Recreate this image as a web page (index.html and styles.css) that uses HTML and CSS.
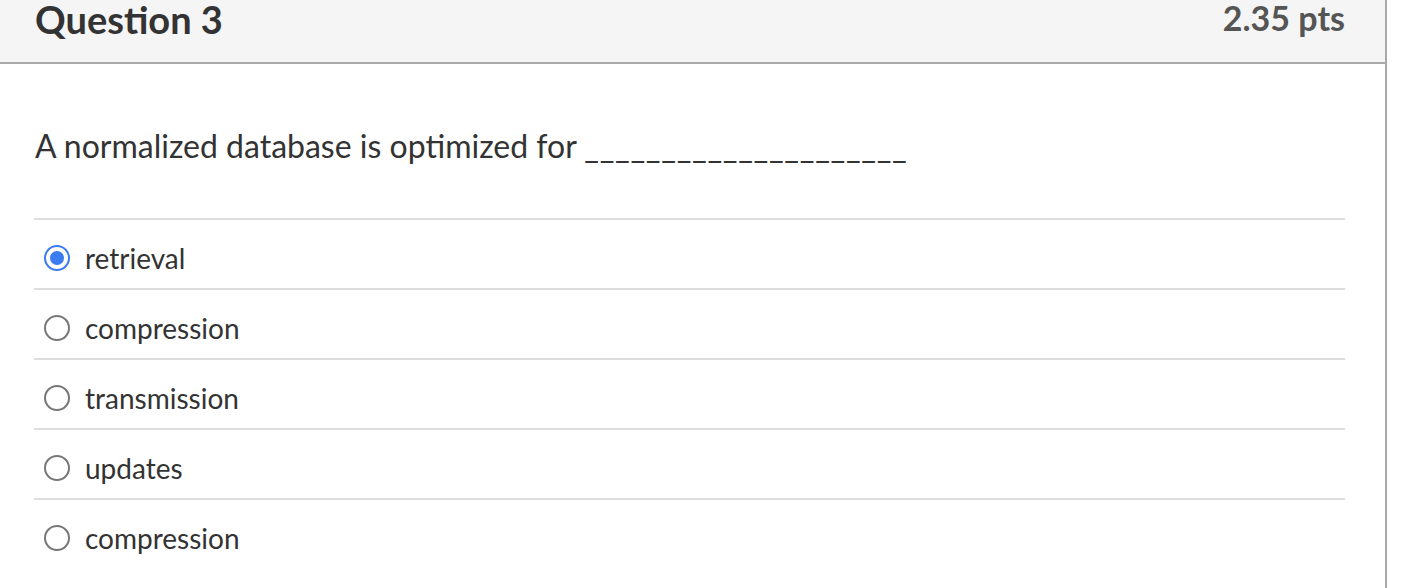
FILE: index.html
```html
<!DOCTYPE html>
<html>
<head>
<meta charset="utf-8">
<link rel="stylesheet" href="styles.css">
</head>
<body>
<div class="card">
  <div class="header">
    <span class="title">Question 3</span>
    <span class="pts">2.35 pts</span>
  </div>
  <div class="body">
    <p class="question">A normalized database is optimized for <span class="blank">_____________________</span></p>
    <div class="answers">
      <label class="answer"><span class="radio checked"></span><span class="label">retrieval</span></label>
      <label class="answer"><span class="radio"></span><span class="label">compression</span></label>
      <label class="answer"><span class="radio"></span><span class="label">transmission</span></label>
      <label class="answer"><span class="radio"></span><span class="label">updates</span></label>
      <label class="answer"><span class="radio"></span><span class="label">compression</span></label>
    </div>
  </div>
</div>
</body>
</html>
```
FILE: styles.css
```css
html, body {
  margin: 0;
  padding: 0;
  background: #fff;
  font-family: Lato, "Helvetica Neue", Arial, sans-serif;
  color: #333;
}
.card {
  width: 1385px;
  border-right: 2px solid #aaa;
  min-height: 588px;
}
.header {
  height: 62px;
  background: #f5f5f5;
  border-bottom: 2px solid #aaa;
  display: flex;
  justify-content: space-between;
  align-items: flex-start;
  padding: 0 40px 0 35px;
  box-sizing: content-box;
}
.title {
  font-size: 38px;
  font-weight: 700;
  color: #333;
  line-height: 1;
}
.pts {
  font-size: 34px;
  font-weight: 700;
  color: #555;
  line-height: 1;
  padding-top: 1px;
}
.body {
  padding: 0 40px 0 34px;
}
.question {
  margin: 0;
  padding: 64px 0 0 1px;
  font-size: 32px;
  line-height: 36px;
  height: 90px;
  box-sizing: content-box;
}
.blank {
  letter-spacing: 0.7px;
}
.answers {
  display: flex;
  flex-direction: column;
}
.answer {
  display: flex;
  align-items: center;
  height: 60px;
  padding-top: 8px;
  border-top: 2px solid #ddd;
  padding-left: 10px;
}
.radio {
  width: 26px;
  height: 26px;
  box-sizing: border-box;
  border: 2px solid #777;
  border-radius: 50%;
  flex: none;
  position: relative;
}
.radio.checked {
  border-color: #3b7cf0;
}
.radio.checked::after {
  content: "";
  position: absolute;
  left: 4px;
  top: 4px;
  width: 14px;
  height: 14px;
  border-radius: 50%;
  background: #3b7cf0;
}
.label {
  margin-left: 15px;
  font-size: 28px;
  color: #333;
}
```
